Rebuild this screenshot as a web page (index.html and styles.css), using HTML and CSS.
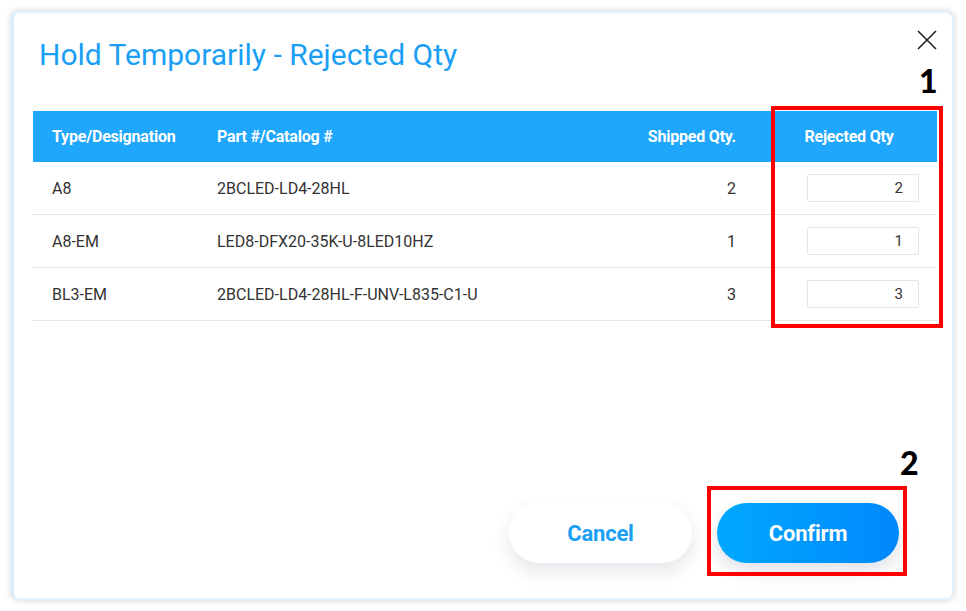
FILE: index.html
```html
<!DOCTYPE html>
<html lang="en">
<head>
  <meta charset="UTF-8">
  <title>Hold Temporarily - Rejected Qty</title>
  <link rel="stylesheet" href="styles.css">
</head>
<body>

<div class="dialog">
  <div class="dialog-head">
    <h2 class="title">Hold Temporarily - Rejected Qty</h2>
    <button class="close" title="Close">
      <svg width="20" height="20" viewBox="0 0 20 20"><path d="M1 1 L19 19 M19 1 L1 19" stroke="#222" stroke-width="1.6" fill="none"/></svg>
    </button>
  </div>

  <table class="qty-table">
    <thead>
      <tr>
        <th class="col-type">Type/Designation</th>
        <th class="col-part">Part #/Catalog #</th>
        <th class="col-ship">Shipped Qty.</th>
        <th class="col-rej">Rejected Qty</th>
      </tr>
    </thead>
    <tbody>
      <tr>
        <td>A8</td>
        <td>2BCLED-LD4-28HL</td>
        <td class="num">2</td>
        <td class="rej"><input class="qty-input" type="text" value="2"></td>
      </tr>
      <tr>
        <td>A8-EM</td>
        <td>LED8-DFX20-35K-U-8LED10HZ</td>
        <td class="num">1</td>
        <td class="rej"><input class="qty-input" type="text" value="1"></td>
      </tr>
      <tr>
        <td>BL3-EM</td>
        <td>2BCLED-LD4-28HL-F-UNV-L835-C1-U</td>
        <td class="num">3</td>
        <td class="rej"><input class="qty-input" type="text" value="3"></td>
      </tr>
    </tbody>
  </table>

  <div class="actions">
    <button class="btn btn-cancel">Cancel</button>
    <button class="btn btn-confirm">Confirm</button>
  </div>

  <!-- annotations -->
  <div class="mark mark-1"></div>
  <span class="mark-num num-1">1</span>
  <div class="mark mark-2"></div>
  <span class="mark-num num-2">2</span>
</div>

</body>
</html>
```

FILE: styles.css
```css
body {
  font-family: Roboto, Arial, sans-serif;
  background: #fff;
  margin: 0;
  padding: 11px;
}

.dialog {
  position: relative;
  box-sizing: border-box;
  width: 943px;
  height: 589px;
  background: #fff;
  border: 2px solid #e3f1fc;
  border-left: 3px solid #d8ecfb;
  border-radius: 8px;
  box-shadow: 0 0 7px rgba(0, 0, 0, 0.18);
  display: flex;
  flex-direction: column;
  padding: 0 15px 35px 19px;
}

.dialog-head {
  display: flex;
  justify-content: space-between;
  align-items: flex-start;
  height: 98px;
}

.title {
  margin: 24px 0 0 6px;
  font-size: 30px;
  font-weight: 400;
  color: #1a9ff5;
  line-height: 36px;
}

.close {
  background: none;
  border: none;
  padding: 0;
  margin: 17px 0 0 0;
  cursor: pointer;
}

.qty-table {
  width: 904px;
  border-collapse: collapse;
  font-size: 16px;
  color: #333;
}

.qty-table th {
  background: #1fa6fd;
  color: #fff;
  font-weight: 700;
  font-size: 16px;
  height: 51px;
  padding-top: 0;
  padding-bottom: 0;
  text-align: left;
  letter-spacing: -0.2px;
}

.qty-table td {
  height: 52px;
  padding-top: 0;
  padding-bottom: 0;
  border-bottom: 1px solid #e6e6e6;
}

.col-type,
.qty-table td:first-child {
  width: 146px;
  padding-left: 19px;
}

.col-part,
.qty-table td:nth-child(2) {
  padding-left: 18px;
}

.col-ship,
.qty-table td.num {
  text-align: right !important;
  padding-right: 38px;
}

.col-rej {
  width: 148px;
  padding-right: 14px;
  text-align: center !important;
}

.rej {
  padding-left: 33px;
}

.qty-input {
  box-sizing: border-box;
  width: 112px;
  height: 28px;
  border: 1px solid #e4e4e4;
  border-radius: 2px;
  text-align: right;
  padding-right: 15px;
  font-family: Roboto, Arial, sans-serif;
  font-size: 15px;
  color: #333;
}

.actions {
  margin-top: auto;
  display: flex;
  justify-content: flex-end;
  gap: 25px;
  padding-right: 38px;
}

.btn {
  width: 183px;
  height: 60px;
  border: none;
  border-radius: 30px;
  font-family: Roboto, Arial, sans-serif;
  font-size: 22px;
  font-weight: 700;
  letter-spacing: -0.2px;
  cursor: pointer;
}

.btn-cancel {
  background: #fff;
  color: #1a9ff5;
  box-shadow: 0 8px 18px rgba(60, 70, 100, 0.14);
}

.btn-confirm {
  width: 182px;
  background: linear-gradient(90deg, #00a8fe, #0088fd);
  color: #fff;
  box-shadow: 0 8px 18px rgba(60, 70, 100, 0.16);
}

.mark {
  position: absolute;
  border: 4px solid #ff0000;
  box-sizing: border-box;
}

.mark-1 {
  left: 757px;
  top: 93px;
  width: 172px;
  height: 222px;
}

.mark-2 {
  left: 693px;
  top: 473px;
  width: 200px;
  height: 90px;
}

.mark-num {
  position: absolute;
  font-family: Lato, "Open Sans", sans-serif;
  font-weight: 900;
  font-size: 32px;
  color: #000;
  line-height: 1;
}

.num-1 {
  left: 905px;
  top: 52px;
}

.num-2 {
  left: 886px;
  top: 434px;
}
```
